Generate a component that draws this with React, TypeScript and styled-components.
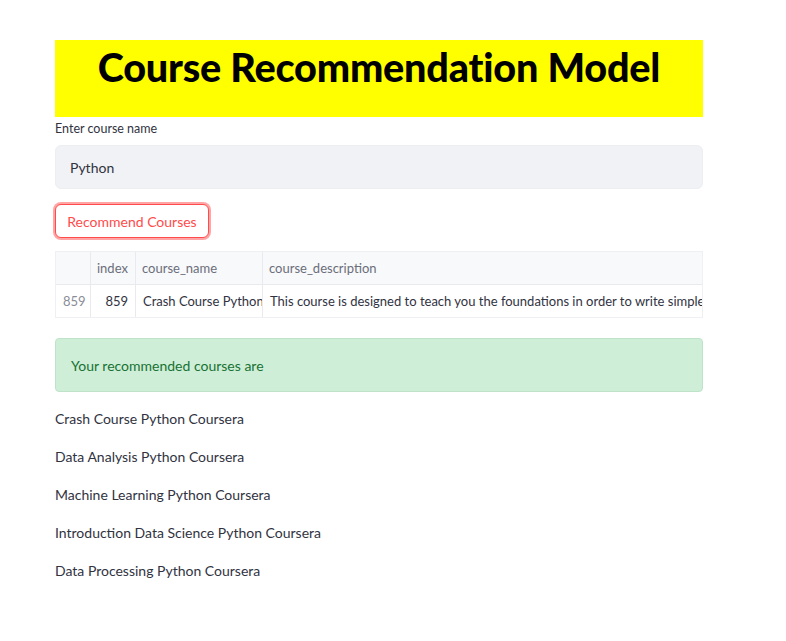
import React from "react";
import styled, { createGlobalStyle } from "styled-components";

const Global = createGlobalStyle`
  html, body { margin: 0; padding: 0; background: #ffffff; }
  body { font-family: "Lato", "Noto Sans", sans-serif; color: #31333f; }
  * { box-sizing: border-box; }
`;

const Page = styled.div`
  width: 648px;
  margin-left: 55px;
  padding-top: 40px;
  display: flex;
  flex-direction: column;
`;

const Banner = styled.div`
  background: #ffff00;
  height: 77px;
  display: flex;
  justify-content: center;
  padding-top: 2px;
`;

const Title = styled.h1`
  margin: 0;
  font-family: "Lato", sans-serif;
  font-weight: 900;
  font-size: 39.6px;
  line-height: 50px;
  color: #000;
  letter-spacing: -0.2px;
`;

const Label = styled.label`
  margin-top: 4px;
  font-size: 12.5px;
  line-height: 16px;
  color: #31333f;
`;

const InputBox = styled.div`
  margin-top: 8px;
  height: 44px;
  background: #f0f2f6;
  border: 1px solid #eceef2;
  border-radius: 6px;
  display: flex;
  align-items: center;
  padding-left: 14px;
  font-size: 14px;
  color: #31333f;
`;

const ButtonRow = styled.div`
  margin-top: 15px;
  display: flex;
`;

const Button = styled.button`
  height: 34px;
  width: 154px;
  border: 1px solid #ff4b4b;
  border-radius: 6px;
  background: #fff;
  color: #ff4b4b;
  font-family: "Lato", sans-serif;
  font-size: 14px;
  box-shadow: 0 0 0 2px rgba(255, 75, 75, 0.5);
  padding: 0;
`;

const Table = styled.div`
  margin-top: 13px;
  border: 1px solid #eef0f3;
  display: grid;
  grid-template-columns: 35px 45px 127px 1fr;
  font-size: 13px;
  overflow: hidden;
`;

const HeadCell = styled.div<{ $last?: boolean }>`
  height: 33px;
  background: #f8f9fb;
  border-right: ${(p) => (p.$last ? "none" : "1px solid #e8eaee")};
  border-bottom: 1px solid #e8eaee;
  display: flex;
  align-items: center;
  padding-left: 6px;
  color: #6b6e7a;
`;

const Cell = styled.div<{ $align?: string; $muted?: boolean; $last?: boolean }>`
  height: 32px;
  border-right: ${(p) => (p.$last ? "none" : "1px solid #e8eaee")};
  display: flex;
  align-items: center;
  justify-content: ${(p) => p.$align || "flex-start"};
  padding: 0 7px;
  color: ${(p) => (p.$muted ? "#8a8d97" : "#31333f")};
  white-space: nowrap;
  overflow: hidden;
`;

const Success = styled.div`
  margin-top: 20px;
  height: 54px;
  background: #cfeed8;
  border: 1px solid #bfe3c9;
  border-radius: 4px;
  display: flex;
  align-items: center;
  padding-left: 15px;
  font-size: 14px;
  color: #177233;
`;

const List = styled.div`
  margin-top: 17px;
  display: flex;
  flex-direction: column;
  gap: 19px;
`;

const Item = styled.p`
  margin: 0;
  font-size: 14px;
  line-height: 19px;
  color: #31333f;
`;

const courses = [
  "Crash Course Python Coursera",
  "Data Analysis Python Coursera",
  "Machine Learning Python Coursera",
  "Introduction Data Science Python Coursera",
  "Data Processing Python Coursera",
];

export default function App() {
  return (
    <>
      <Global />
      <Page>
        <Banner>
          <Title>Course Recommendation Model</Title>
        </Banner>
        <Label>Enter course name</Label>
        <InputBox>Python</InputBox>
        <ButtonRow>
          <Button>Recommend Courses</Button>
        </ButtonRow>
        <Table>
          <HeadCell />
          <HeadCell>index</HeadCell>
          <HeadCell>course_name</HeadCell>
          <HeadCell $last>course_description</HeadCell>
          <Cell $muted>859</Cell>
          <Cell $align="flex-end">859</Cell>
          <Cell>Crash Course Python Coursera</Cell>
          <Cell $last>
            This course is designed to teach you the foundations in order to write simple programs in Python
          </Cell>
        </Table>
        <Success>Your recommended courses are</Success>
        <List>
          {courses.map((c) => (
            <Item key={c}>{c}</Item>
          ))}
        </List>
      </Page>
    </>
  );
}
